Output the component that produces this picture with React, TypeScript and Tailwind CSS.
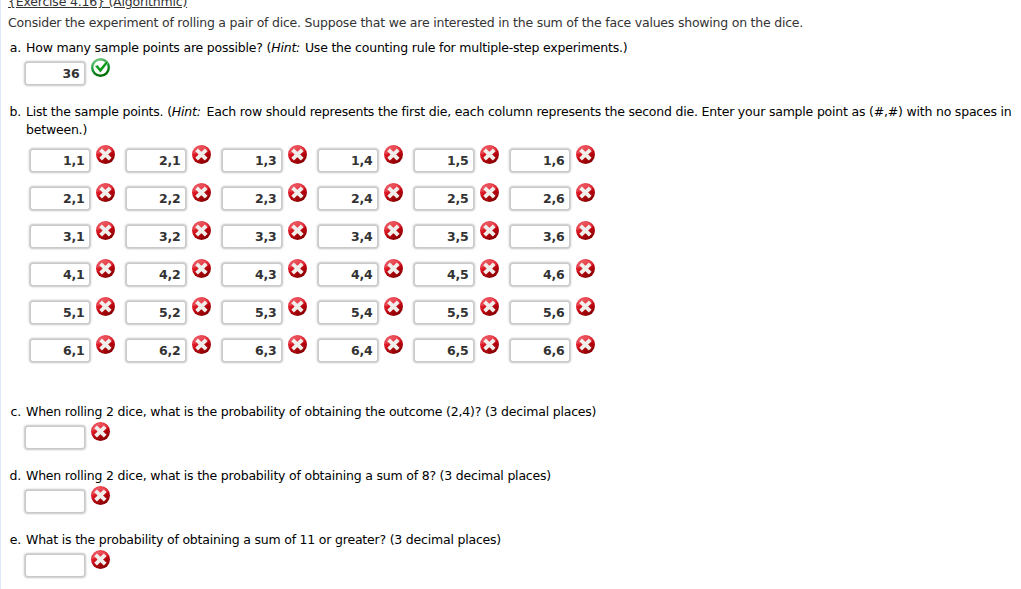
import type { ReactNode } from "react";

const points = [
  ["1,1", "2,1", "1,3", "1,4", "1,5", "1,6"],
  ["2,1", "2,2", "2,3", "2,4", "2,5", "2,6"],
  ["3,1", "3,2", "3,3", "3,4", "3,5", "3,6"],
  ["4,1", "4,2", "4,3", "4,4", "4,5", "4,6"],
  ["5,1", "5,2", "5,3", "5,4", "5,5", "5,6"],
  ["6,1", "6,2", "6,3", "6,4", "6,5", "6,6"],
];

function WrongIcon() {
  return (
    <svg className="h-[19px] w-[19px] shrink-0" viewBox="0 0 19 19">
      <defs>
        <linearGradient id="wrong" x1="0.2" y1="0" x2="0.7" y2="1">
          <stop offset="0" stopColor="#ec5a64" />
          <stop offset="0.4" stopColor="#dc1824" />
          <stop offset="0.6" stopColor="#b80610" />
          <stop offset="1" stopColor="#820000" />
        </linearGradient>
      </defs>
      <circle cx="9.5" cy="9.5" r="9.5" fill="url(#wrong)" />
      <path d="M1 9A8.6 8.6 0 0 1 17 5.5Q9 6.5 1 9Z" fill="#ffa5a8" opacity="0.25" />
      <path d="M4.6 4.8L14.2 14.2M14.2 4.8L4.6 14.2" stroke="#f1efeb" strokeWidth="3.9" />
    </svg>
  );
}

function CorrectIcon() {
  return (
    <svg className="h-[19px] w-[19px] shrink-0" viewBox="0 0 19 19">
      <defs>
        <linearGradient id="correct" x1="0.2" y1="0" x2="0.6" y2="1">
          <stop offset="0" stopColor="#74c982" />
          <stop offset="0.5" stopColor="#169735" />
          <stop offset="1" stopColor="#006b00" />
        </linearGradient>
      </defs>
      <circle cx="9.5" cy="9.5" r="8.3" fill="#fff" stroke="url(#correct)" strokeWidth="2.4" />
      <path d="M3.8 8L6.8 7L9.2 10.2L15.4 2.8L17.4 4.6L9.4 14.8Z" fill="#0a9a18" stroke="#fff" strokeWidth="0.4" />
    </svg>
  );
}

function Answer({ value = "", correct = false }: { value?: string; correct?: boolean }) {
  return (
    <div className="flex w-24 items-start">
      <div className="mt-1 mr-1.5 h-[23px] w-[60px] rounded-[3px] border border-[#cacaca] bg-white pr-[4.5px] text-right text-[12.5px] leading-[22px] font-bold text-[#333] shadow-[0_0_2px_1px_#c4c4c4]">
        {value}
      </div>
      {correct ? <CorrectIcon /> : <WrongIcon />}
    </div>
  );
}

function Question({ letter, children }: { letter: string; children: ReactNode }) {
  return (
    <div className="flex">
      <span className="w-[25px] shrink-0 pr-[5px] text-right">{letter}.</span>
      <p className="whitespace-nowrap">{children}</p>
    </div>
  );
}

export default function App() {
  return (
    <div className="h-[589px] overflow-hidden border-l border-[#dbe9fb] bg-white font-['DejaVu_Sans',sans-serif] text-[12.5px] leading-[18px] tracking-[-0.205px] text-black">
      <div className="-mt-[7px] pl-[7px] text-[#333] underline">{"{Exercise 4.16} (Algorithmic)"}</div>
      <p className="mt-[3px] pl-[7px] tracking-[-0.22px] whitespace-nowrap text-[#333]">
        Consider the experiment of rolling a pair of dice. Suppose that we are interested in the sum of the face values showing on the dice.
      </p>

      <div className="mt-[7px]">
        <Question letter="a">
          How many sample points are possible? (<em className="mr-px">Hint:</em> Use the counting rule for multiple-step experiments.)
        </Question>
        <div className="mt-px h-[45px] pl-6">
          <Answer value="36" correct />
        </div>
      </div>

      <div className="h-[300px]">
        <Question letter="b">
          List the sample points. (<em className="mr-0.5">Hint:</em> Each row should represents the first die, each column represents the second die. Enter your sample point as (#,#) with no spaces in
          <br />
          between.)
        </Question>
        <div className="mt-1.5 flex flex-col pl-[29px]">
          {points.map((row, i) => (
            <div key={i} className="flex h-[38px]">
              {row.map((value, j) => (
                <Answer key={j} value={value} />
              ))}
            </div>
          ))}
        </div>
      </div>

      <div className="h-16">
        <Question letter="c">
          When rolling 2 dice, what is the probability of obtaining the outcome (2,4)? (3 decimal places)
        </Question>
        <div className="mt-px pl-6">
          <Answer />
        </div>
      </div>

      <div className="h-16">
        <Question letter="d">
          When rolling 2 dice, what is the probability of obtaining a sum of 8? (3 decimal places)
        </Question>
        <div className="mt-px pl-6">
          <Answer />
        </div>
      </div>

      <div className="h-16">
        <Question letter="e">
          What is the probability of obtaining a sum of 11 or greater? (3 decimal places)
        </Question>
        <div className="mt-px pl-6">
          <Answer />
        </div>
      </div>
    </div>
  );
}
